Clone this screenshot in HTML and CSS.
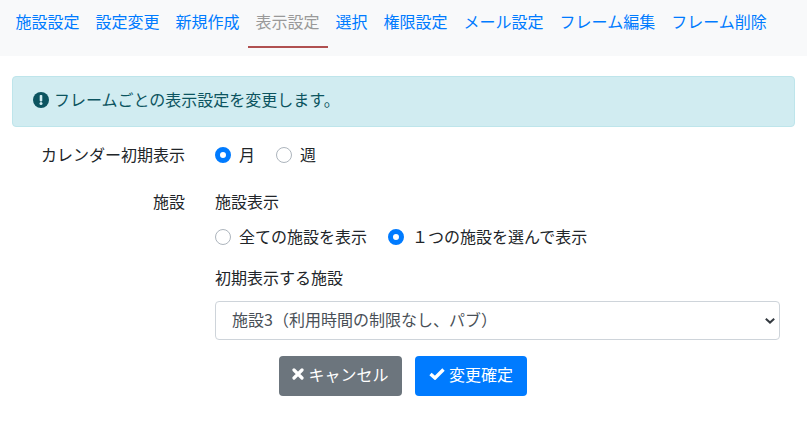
FILE: index.html
```html
<!DOCTYPE html>
<html lang="ja">
<head>
  <meta charset="utf-8">
  <title>表示設定</title>
  <link rel="stylesheet" href="styles.css">
</head>
<body>
<ul class="nav-menu">
  <li><a href="#">施設設定</a></li>
  <li><a href="#">設定変更</a></li>
  <li><a href="#">新規作成</a></li>
  <li class="active"><a href="#">表示設定</a></li>
  <li><a href="#">選択</a></li>
  <li><a href="#">権限設定</a></li>
  <li><a href="#">メール設定</a></li>
  <li><a href="#">フレーム編集</a></li>
  <li><a href="#">フレーム削除</a></li>
</ul>

<div class="alert">
  <svg class="alert-icon" viewBox="0 0 16 16" width="16" height="16">
    <circle cx="8" cy="8" r="8" fill="#0c5460"/>
    <rect x="6.7" y="3" width="2.6" height="6.4" rx="0.8" fill="#d1ecf1"/>
    <circle cx="8" cy="11.6" r="1.5" fill="#d1ecf1"/>
  </svg>
  <span class="alert-text">フレームごとの表示設定を変更します。</span>
</div>

<form class="form">
  <div class="form-row row-calendar">
    <div class="form-label">カレンダー初期表示</div>
    <div class="form-field">
      <div class="radios">
        <label class="radio"><span class="dot checked"></span>月</label>
        <label class="radio"><span class="dot"></span>週</label>
      </div>
    </div>
  </div>

  <div class="form-row">
    <div class="form-label">施設</div>
    <div class="form-field">
      <div class="field-title">施設表示</div>
      <div class="radios radios-wide">
        <label class="radio"><span class="dot"></span>全ての施設を表示</label>
        <label class="radio"><span class="dot checked"></span>１つの施設を選んで表示</label>
      </div>
      <div class="field-title select-title">初期表示する施設</div>
      <div class="select">
        <span class="select-text">施設3（利用時間の制限なし、パブ）</span>
        <svg class="select-arrow" viewBox="0 0 10 6" width="10" height="6">
          <path d="M0.8 0.8 L5 4.6 L9.2 0.8" fill="none" stroke="#343a40" stroke-width="2"/>
        </svg>
      </div>
    </div>
  </div>

  <div class="buttons">
    <button type="button" class="btn btn-cancel">
      <svg viewBox="0 0 12 12" width="12" height="12">
        <path d="M2 2 L10 10 M10 2 L2 10" fill="none" stroke="#fff" stroke-width="3.2" stroke-linecap="round"/>
      </svg>
      キャンセル
    </button>
    <button type="button" class="btn btn-ok">
      <svg viewBox="0 0 16 12" width="16" height="12">
        <path d="M1.5 6 L6 10 L14.5 1.5" fill="none" stroke="#fff" stroke-width="3.4"/>
      </svg>
      変更確定
    </button>
  </div>
</form>
</body>
</html>
```

FILE: styles.css
```css
* {
    box-sizing: border-box;
}
body {
    margin: 0;
    font-family: "Noto Sans CJK JP", "Liberation Sans", sans-serif;
    font-size: 16px;
    line-height: 24px;
    color: #212529;
    background: #fff;
}

.nav-menu {
    display: flex;
    margin: 0;
    padding: 0 7.5px;
    height: 56px;
    list-style: none;
    background: #f8f9fa;
}
.nav-menu li {
    height: 48px;
    border-bottom: 2px solid transparent;
}
.nav-menu a {
    display: block;
    padding: 9px 8px;
    color: #007bff;
    text-decoration: none;
}
.nav-menu .active {
    border-bottom-color: #b05050;
}
.nav-menu .active a {
    color: #999;
}

.alert {
    display: flex;
    align-items: center;
    gap: 5px;
    margin: 20px 12px 0;
    padding: 0 20px 3px;
    height: 51px;
    color: #0c5460;
    background: #d1ecf1;
    border: 1px solid #bee5eb;
    border-radius: 4px;
}
.alert-text {
    margin-bottom: 2px;
}

.form {
    padding: 16px 12px 0;
}
.form-row {
    display: flex;
}
.row-calendar {
    margin-bottom: 23px;
}
.form-label {
    width: 173px;
    line-height: 22px;
    text-align: right;
}
.form-field {
    flex: 1;
    margin-left: 30px;
    margin-right: 3px;
}
.radios {
    display: flex;
    gap: 21px;
    height: 24px;
}
.radios-wide {
    margin-top: 11px;
}
.radio {
    display: flex;
    align-items: flex-start;
    gap: 8px;
    line-height: 22px;
}
.dot {
    width: 16px;
    height: 16px;
    margin-top: 4px;
    background: #fff;
    border: 1px solid #adb5bd;
    border-radius: 50%;
}
.dot.checked {
    border: 5px solid #007bff;
}
.field-title {
    height: 24px;
    line-height: 23px;
}
.select-title {
    margin-top: 17px;
}
.select {
    display: flex;
    align-items: center;
    justify-content: space-between;
    margin-top: 11px;
    margin-right: 12px;
    padding: 0 4px 0 16px;
    height: 39px;
    color: #495057;
    border: 1px solid #ced4da;
    border-radius: 4px;
}
.select-text {
    margin-bottom: 3px;
}

.buttons {
    display: flex;
    justify-content: flex-start;
    gap: 13px;
    margin: 16px 0 0 267px;
}
.btn {
    display: flex;
    align-items: center;
    justify-content: center;
    gap: 4px;
    height: 40px;
    padding: 0 12px 4px;
    font: inherit;
    color: #fff;
    border: 0;
    border-radius: 4px;
}
.btn-cancel {
    width: 123px;
    background: #6c757d;
}
.btn-ok {
    width: 112px;
    background: #007bff;
}
```
